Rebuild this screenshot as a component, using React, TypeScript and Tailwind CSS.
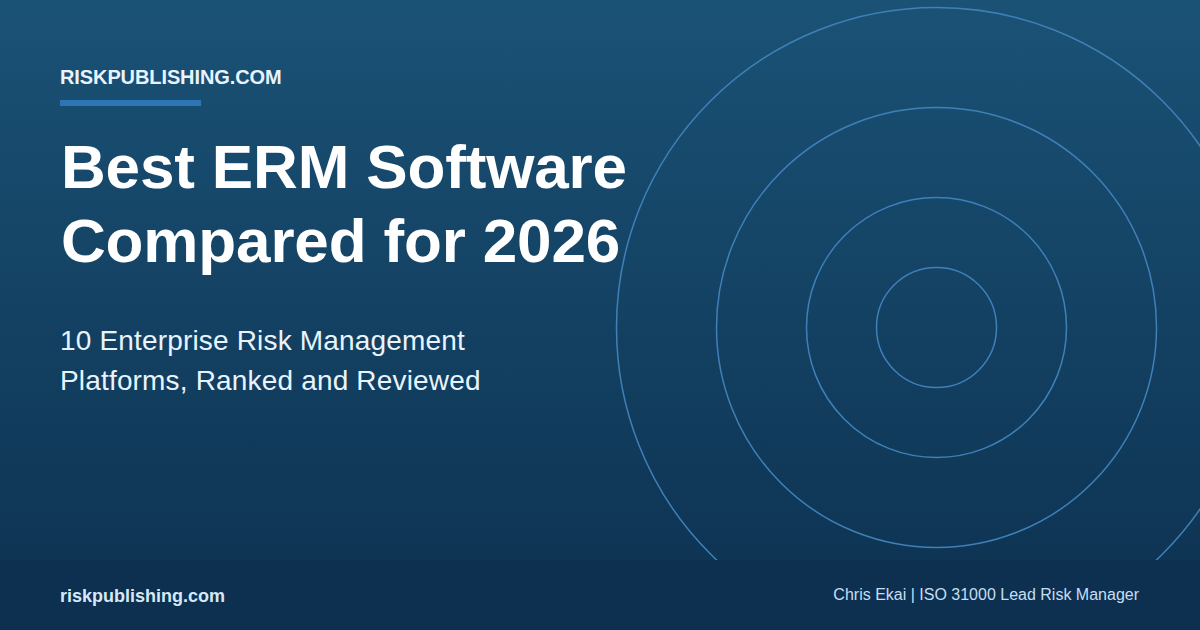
export default function App() {
  return (
    <div className="relative flex h-[630px] w-[1200px] flex-col overflow-hidden bg-gradient-to-b from-[#1a5276] to-[#0d3150] font-['Liberation_Sans',Arial,sans-serif]">
      <div className="relative flex-1">
        {/* target rings */}
        <svg className="absolute left-0 top-0" width="1200" height="560" viewBox="0 0 1200 560" fill="none">
          <circle cx="936.5" cy="327.5" r="60" stroke="#3f80b8" strokeWidth="1.5" />
          <circle cx="936.5" cy="327.5" r="130" stroke="#3f80b8" strokeWidth="1.5" />
          <circle cx="936.5" cy="327.5" r="220" stroke="#3f80b8" strokeWidth="1.5" />
          <circle cx="936.5" cy="327.5" r="320" stroke="#3f80b8" strokeWidth="1.5" />
        </svg>
        <div className="relative flex flex-col pl-[60px] pt-[64px]">
          <div className="text-[20px] font-bold leading-[26px] tracking-[-0.1px] text-[#e8f4fd]">RISKPUBLISHING.COM</div>
          <div className="mt-[10px] h-[6px] w-[141px] bg-[#2e75b6]" />
          <h1 className="ml-[1px] mt-[24px] text-[62px] font-bold leading-[74px] tracking-[-0.15px] text-white">
            <div>Best ERM Software</div>
            <div>Compared for 2026</div>
          </h1>
          <div className="mt-[43px] text-[28px] leading-[40px] tracking-[0.17px] text-[#e8f4fd]">
            <div>10 Enterprise Risk Management</div>
            <div>Platforms, Ranked and Reviewed</div>
          </div>
        </div>
      </div>
      <div className="flex h-[70px] items-center justify-between bg-[#0d3050] pl-[60px] pr-[61px]">
        <span className="mt-[2px] text-[18px] font-bold text-[#d6e8f7]">riskpublishing.com</span>
        <span className="text-[16px] text-[#c5dff2]">Chris Ekai | ISO 31000 Lead Risk Manager</span>
      </div>
    </div>
  );
}
